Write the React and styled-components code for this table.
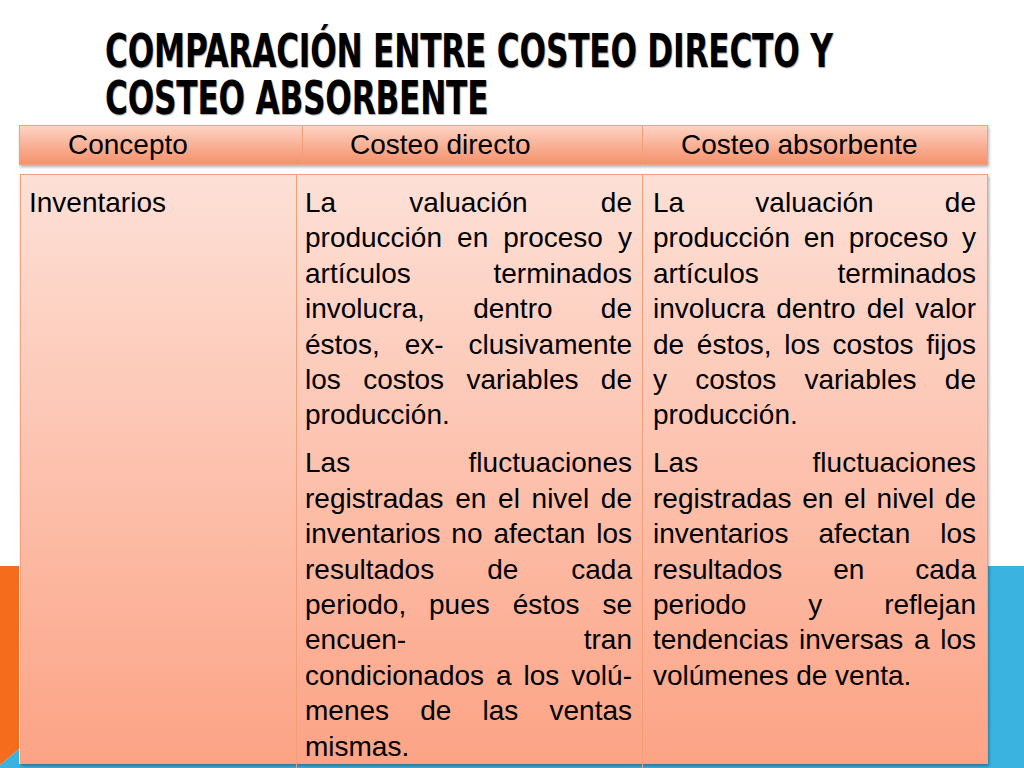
import styled, { createGlobalStyle } from 'styled-components';

const Global = createGlobalStyle`
  html, body {
    margin: 0;
    padding: 0;
    background: #ffffff;
  }
`

const Slide = styled.div`
  position: relative;
  width: 1024px;
  height: 768px;
  overflow: hidden;
  background: #ffffff;
  font-family: "Liberation Sans", Arial, sans-serif;
  color: #000;
`

// decorative bands of the slide theme, lying under the table
const BlueBand = styled.div`
  position: absolute;
  right: 0;
  bottom: 0;
  width: 1024px;
  height: 202px;
  background: #3bb3e0;
  clip-path: polygon(988px 0, 1024px 0, 1024px 202px, 0 202px, 0 199px, 19px 183px, 19px 198px, 988px 198px);
`

const OrangeBand = styled.div`
  position: absolute;
  left: 0;
  bottom: 0;
  width: 19px;
  height: 202px;
  background: #f56c1d;
  clip-path: polygon(0 0, 19px 0, 19px 183px, 0 199px);
`

const Content = styled.div`
  position: relative;
  display: flex;
  flex-direction: column;
  padding: 28px 36px 0 19px;
`

const Title = styled.h1`
  margin: 0 0 3px 86px;
  font-family: "DejaVu Sans Condensed", "DejaVu Sans", "Liberation Sans", sans-serif;
  font-stretch: condensed;
  font-weight: bold;
  font-size: 46px;
  line-height: 47px;
  letter-spacing: -0.3px;
  text-transform: uppercase;
  text-shadow: 1px 1px 1px rgba(0, 0, 0, 0.35);
`

const TitleLine = styled.span`
  display: block;
  white-space: nowrap;
  transform: scaleX(0.755);
  transform-origin: left center;
`

const HeaderRow = styled.div`
  display: grid;
  grid-template-columns: 282px 340px 347px;
  height: 40px;
  background: linear-gradient(#fcd3c3, #f5916b);
  border: 1px solid #f2a27e;
  box-sizing: border-box;
  box-shadow: 1px 2px 3px rgba(0, 0, 0, 0.3);
`

const HeadCell = styled.div`
  display: flex;
  align-items: center;
  padding-left: ${p => p.$indent}px;
  font-size: 28px;
  border-left: ${p => (p.$first ? 'none' : '1px solid #f29e78')};
`

const Body = styled.div`
  display: grid;
  grid-template-columns: 275px 346px 347px;
  height: 590px;
  margin-top: 9px;
  margin-left: 1px;
  background: linear-gradient(#fde0d6, #fca385);
  border: 1px solid #f2a27e;
  box-sizing: border-box;
  box-shadow: 1px 2px 3px rgba(0, 0, 0, 0.35);
`

const Cell = styled.div`
  padding: 10px ${p => p.$right}px 0 ${p => p.$left}px;
  font-size: 28px;
  line-height: 35.4px;
  text-align: ${p => (p.$justify ? 'justify' : 'left')};
  border-left: ${p => (p.$first ? 'none' : '1px solid #f29e78')};
`

const Para = styled.p`
  margin: 0 0 12.6px 0;
`

function App() {
  return (
    <>
      <Global />
      <Slide>
        <BlueBand />
        <OrangeBand />
        <Content>
          <Title>
            <TitleLine>Comparación entre costeo directo y</TitleLine>
            <TitleLine>costeo absorbente</TitleLine>
          </Title>
          <HeaderRow>
            <HeadCell $first $indent={48}>Concepto</HeadCell>
            <HeadCell $indent={47}>Costeo directo</HeadCell>
            <HeadCell $indent={38}>Costeo absorbente</HeadCell>
          </HeaderRow>
          <Body>
            <Cell $first $left={8} $right={8}>
              <Para>Inventarios</Para>
            </Cell>
            <Cell $justify $left={8} $right={10}>
              <Para>
                La valuación de producción en proceso y artículos terminados involucra, dentro de éstos, ex- clusivamente los costos variables de producción.
              </Para>
              <Para>
                Las fluctuaciones registradas en el nivel  de inventarios no afectan los resultados de cada periodo, pues éstos se encuen- tran condicionados a los volú- menes de las ventas mismas.
              </Para>
            </Cell>
            <Cell $justify $left={10} $right={13}>
              <Para>
                La valuación de producción en proceso y artículos terminados involucra dentro del valor de éstos, los costos fijos y costos variables de producción.
              </Para>
              <Para>
                Las fluctuaciones registradas en el nivel de inventarios afectan los resultados en cada periodo y reflejan tendencias inversas a los volúmenes de venta.
              </Para>
            </Cell>
          </Body>
        </Content>
      </Slide>
    </>
  )
}

export default App;
